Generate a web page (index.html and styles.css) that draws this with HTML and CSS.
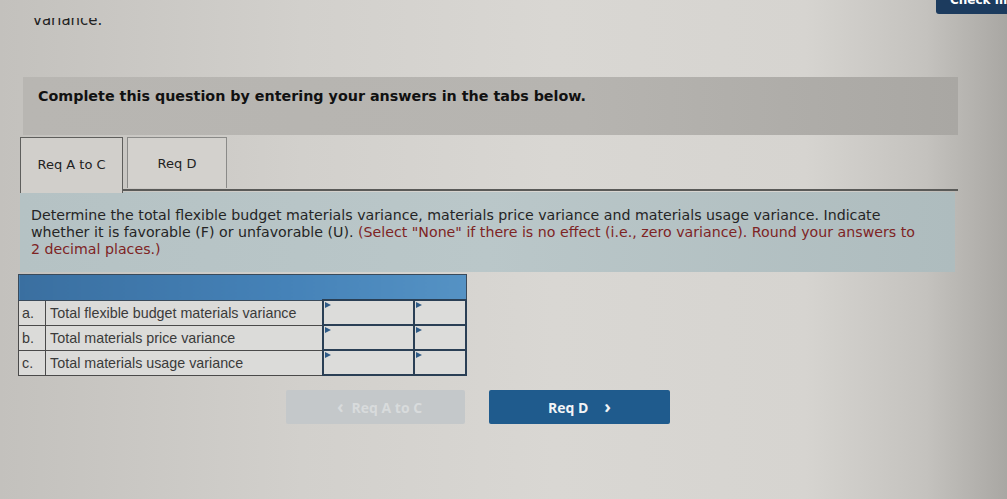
FILE: index.html
```html
<!DOCTYPE html>
<html>
<head>
<meta charset="utf-8">
<link rel="stylesheet" href="styles.css">
</head>
<body>
<div class="page">
  <div class="check-btn">Check my work</div>
  <div class="prev-line"><span>variance.</span></div>

  <div class="instructions">Complete this question by entering your answers in the tabs below.</div>

  <div class="tabs">
    <div class="tab tab-active">Req A to C</div>
    <div class="tab">Req D</div>
    <div class="tab-rule"></div>
  </div>

  <div class="question">
    Determine the total flexible budget materials variance, materials price variance and materials usage variance. Indicate whether it is favorable (F) or unfavorable (U). <span class="red">(Select "None" if there is no effect (i.e., zero variance). Round your answers to 2 decimal places.)</span>
  </div>

  <table class="grid">
    <tr class="head"><td colspan="4"></td></tr>
    <tr>
      <td class="letter">a.</td>
      <td class="label">Total flexible budget materials variance</td>
      <td class="inp wide"><span class="mark"></span></td>
      <td class="inp narrow"><span class="mark"></span></td>
    </tr>
    <tr>
      <td class="letter">b.</td>
      <td class="label">Total materials price variance</td>
      <td class="inp wide"><span class="mark"></span></td>
      <td class="inp narrow"><span class="mark"></span></td>
    </tr>
    <tr>
      <td class="letter">c.</td>
      <td class="label">Total materials usage variance</td>
      <td class="inp wide"><span class="mark"></span></td>
      <td class="inp narrow"><span class="mark"></span></td>
    </tr>
  </table>

  <div class="nav">
    <div class="btn btn-disabled"><span class="chev">&lsaquo;</span> Req A to C</div>
    <div class="btn btn-primary">Req D <span class="chev">&rsaquo;</span></div>
  </div>
</div>
</body>
</html>
```
FILE: styles.css
```css
html, body {
  margin: 0;
  padding: 0;
}
body {
  width: 1007px;
  height: 499px;
  overflow: hidden;
  background: linear-gradient(to right, #c3c1bd 0%, #d2d0cc 30%, #d9d7d3 55%, #d6d4d0 80%, #c4c2be 92%, #a9a7a3 100%);
  font-family: "DejaVu Sans", Verdana, sans-serif;
  color: #222;
}
.page {
  position: relative;
  height: 499px;
  padding-top: 1px;
  box-sizing: border-box;
}
.check-btn {
  position: absolute;
  top: 0;
  left: 936px;
  width: 90px;
  height: 14px;
  background: #1c3b5e;
  border-radius: 0 0 0 3px;
  color: #fff;
  font-size: 12px;
  font-weight: bold;
  line-height: 0;
  padding-left: 14px;
  white-space: nowrap;
  overflow: hidden;
}
.prev-line {
  margin: 17px 0 0 33px;
  height: 8px;
  overflow: hidden;
  line-height: 4px;
  font-size: 15px;
  color: #222;
}
.instructions {
  margin: 51px 0 0 23px;
  width: 920px;
  height: 47px;
  padding: 11px 0 0 15px;
  background: linear-gradient(to right, #b8b6b2 0%, #b6b4b0 60%, #a9a7a3 100%);
  font-weight: bold;
  font-size: 14.3px;
  color: #111;
}
.tabs {
  display: flex;
  align-items: flex-start;
  margin: 2px 0 0 20px;
  height: 55px;
  position: relative;
}
.tab {
  box-sizing: border-box;
  width: 100px;
  height: 51px;
  border: 1px solid #8a8a88;
  border-bottom: none;
  margin-left: 4px;
  display: flex;
  align-items: center;
  justify-content: center;
  font-size: 13px;
  color: #222;
  background: #d3d1cd;
}
.tab-active {
  width: 103px;
  height: 56px;
  margin-left: 0;
  border-color: #5e5e5c;
  padding-bottom: 2px;
  background: #d1cfcb;
  position: relative;
  z-index: 1;
}
.tab-rule {
  align-self: flex-end;
  flex: 0 0 auto;
  width: 835px;
  height: 2px;
  margin-left: -104px;
  margin-bottom: 1px;
  background: #5a5a58;
}
.question {
  margin: 0 0 0 20px;
  width: 895px;
  height: 65px;
  padding: 15px 29px 0 11px;
  background: linear-gradient(to right, #b5c2c4 0%, #bac7c9 50%, #aebcbe 100%);
  font-size: 14.2px;
  line-height: 17px;
  color: #252525;
}
.question .red {
  color: #7e2424;
}
.grid {
  margin: 2px 0 0 18px;
  border-collapse: collapse;
  width: 449px;
  font-family: "Liberation Sans", Arial, sans-serif;
  font-size: 14.3px;
  color: #3a3a3a;
}
.grid td {
  border: 1px solid #4a4a4a;
  height: 23px;
  padding: 0;
  background: #dbdbd9;
}
.grid .head td {
  height: 24px;
  background: linear-gradient(to right, #3a6fa0 0%, #4582b8 60%, #5592c4 100%);
  border-color: #3a4a5a;
}
.grid .letter {
  width: 27px;
  padding-left: 3px;
  box-sizing: border-box;
}
.grid .label {
  width: 271px;
  padding-left: 4px;
}
.grid .inp {
  border: 2px solid #2a3f55;
  position: relative;
  background: #dcdcda;
}
.grid .wide {
  width: 88px;
}
.grid .narrow {
  width: 50px;
}
.mark {
  position: absolute;
  top: 1px;
  left: 1px;
  width: 0;
  height: 0;
  border-top: 3px solid transparent;
  border-bottom: 3px solid transparent;
  border-left: 6px solid #2e5a86;
}
.nav {
  display: flex;
  gap: 24px;
  margin: 14px 0 0 286px;
}
.btn {
  height: 34px;
  display: flex;
  align-items: center;
  justify-content: center;
  font-size: 14px;
  font-weight: bold;
  font-family: "Open Sans", "DejaVu Sans", sans-serif;
  border-radius: 2px;
}
.btn-disabled {
  width: 179px;
  background: #c4c8ca;
  color: #d8dbdc;
}
.btn-primary {
  width: 181px;
  background: #1f5b8d;
  color: #f2f4f6;
}
.chev {
  font-size: 18px;
  margin: 0 8px;
  position: relative;
  top: -1px;
}
.btn-primary .chev {
  margin-left: 16px;
  margin-right: 0;
}
```
